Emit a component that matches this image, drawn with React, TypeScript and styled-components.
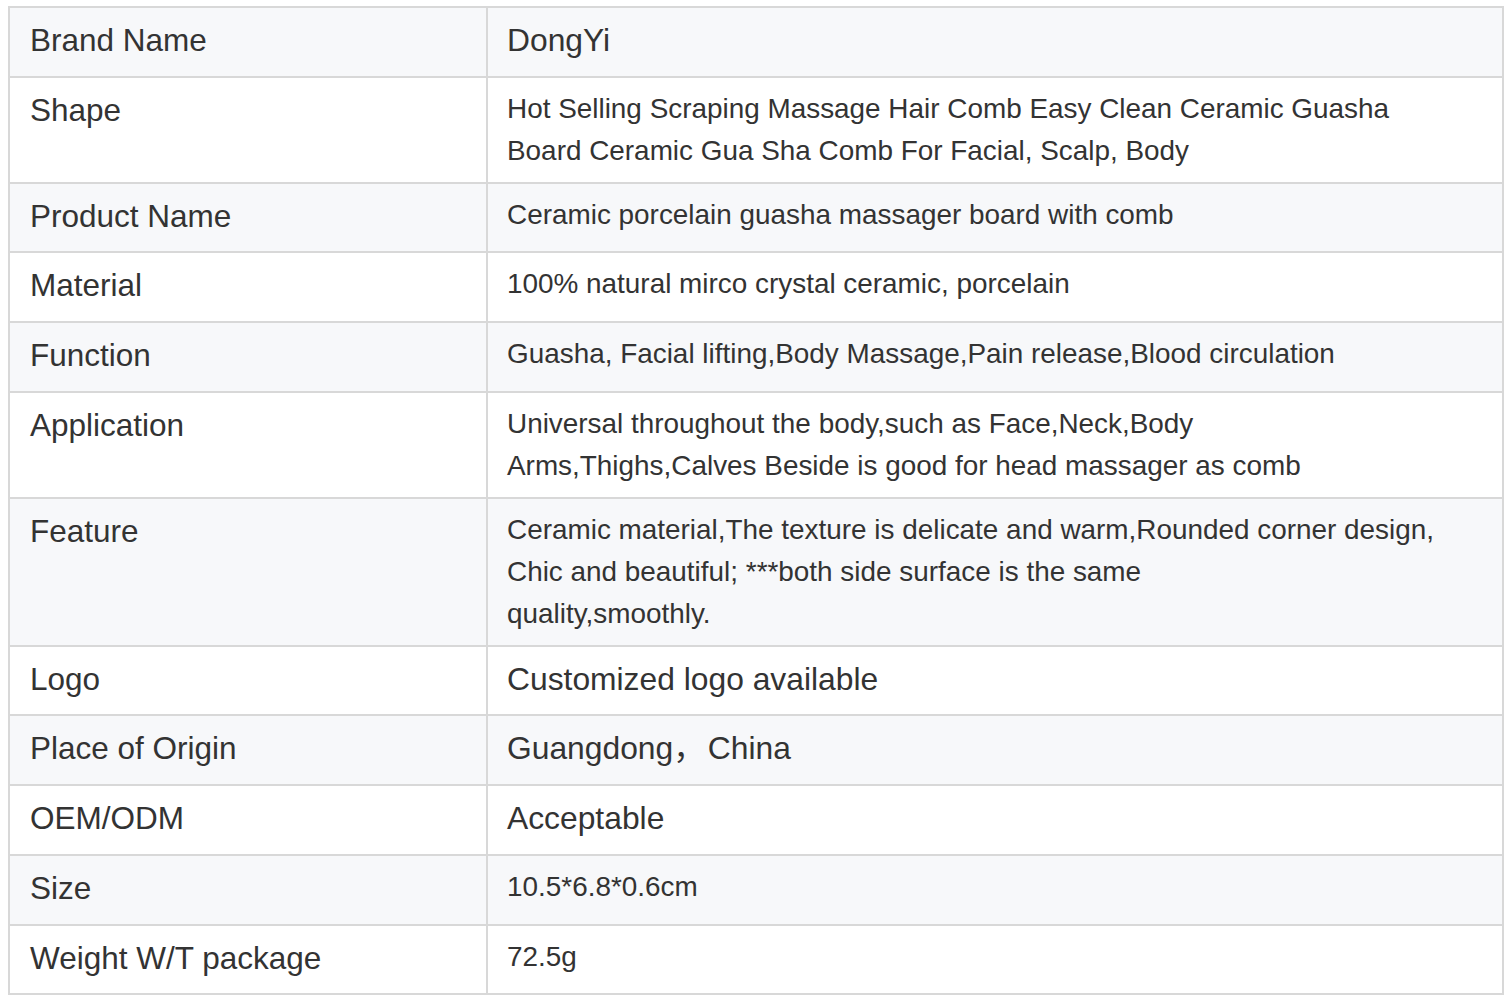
import React from "react";
import styled, { createGlobalStyle } from "styled-components";

const Global = createGlobalStyle`
  html, body { background: #ffffff; }
  body {
    margin: 6px 0 0 8px;
    font-family: "Liberation Sans", Arial, sans-serif;
    color: #333333;
  }
`;

const Table = styled.table`
  width: 1496px;
  border-collapse: collapse;
  table-layout: fixed;
  border: 2px solid #d8d8d8;
`;

const Row = styled.tr<{ $shaded: boolean }>`
  background: ${(p) => (p.$shaded ? "#f7f8fa" : "#ffffff")};
`;

const Label = styled.td`
  width: 436px;
  border: 2px solid #d8d8d8;
  padding: 8px 20px 11.7px 20px;
  vertical-align: top;
  font-size: 31.5px;
  line-height: 48px;
  color: #333333;
`;

const Value = styled.td<{ $large?: boolean }>`
  border: 2px solid #d8d8d8;
  padding: ${(p) => (p.$large ? "8px 20px 11.7px 19px" : "10px 20px 10px 19px")};
  vertical-align: top;
  font-size: ${(p) => (p.$large ? "31.8px" : "27.9px")};
  line-height: ${(p) => (p.$large ? "48px" : "42px")};
  color: #333333;
`;

const WidePunct = styled.span`
  font-family: "Noto Sans CJK SC", sans-serif;
  line-height: 0;
`;

const NarrowGap = styled.span`
  font-size: 10px;
  line-height: 0;
`;

type Spec = { label: string; value: React.ReactNode; large?: boolean };

const specs: Spec[] = [
  { label: "Brand Name", value: "DongYi", large: true },
  {
    label: "Shape",
    value: (
      <>
        Hot Selling Scraping Massage Hair Comb Easy Clean Ceramic Guasha
        <br />
        Board Ceramic Gua Sha Comb For Facial, Scalp, Body
      </>
    ),
  },
  { label: "Product Name", value: "Ceramic porcelain guasha massager board with comb" },
  { label: "Material", value: "100% natural mirco crystal ceramic, porcelain" },
  {
    label: "Function",
    value: "Guasha, Facial lifting,Body Massage,Pain release,Blood circulation",
  },
  {
    label: "Application",
    value: (
      <>
        Universal throughout the body,such as Face,Neck,Body
        <br />
        Arms,Thighs,Calves Beside is good for head massager as comb
      </>
    ),
  },
  {
    label: "Feature",
    value: (
      <>
        Ceramic material,The texture is delicate and warm,Rounded corner design,
        <br />
        Chic and beautiful; ***both side surface is the same
        <br />
        quality,smoothly.
      </>
    ),
  },
  { label: "Logo", value: "Customized logo available", large: true },
  {
    label: "Place of Origin",
    value: (
      <>
        Guangdong<WidePunct>{"\uFF0C"}</WidePunct>
        <NarrowGap> </NarrowGap>China
      </>
    ),
    large: true,
  },
  { label: "OEM/ODM", value: "Acceptable", large: true },
  { label: "Size", value: "10.5*6.8*0.6cm" },
  { label: "Weight W/T package", value: "72.5g" },
];

export default function App() {
  return (
    <>
      <Global />
      <Table>
        <tbody>
          {specs.map((s, i) => (
            <Row key={s.label} $shaded={i % 2 === 0}>
              <Label>{s.label}</Label>
              <Value $large={s.large}>{s.value}</Value>
            </Row>
          ))}
        </tbody>
      </Table>
    </>
  );
}
